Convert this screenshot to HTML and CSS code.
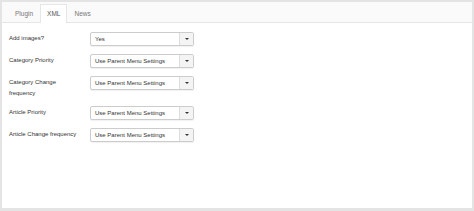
FILE: index.html
```html
<!DOCTYPE html>
<html lang="en">
<head>
    <meta charset="UTF-8">
    <title>Plugin settings</title>
    <link rel="stylesheet" href="styles.css">
</head>
<body>
<div class="panel">
    <!-- Tabs -->
    <ul class="tabs">
        <li><a href="#">Plugin</a></li>
        <li class="active"><a href="#">XML</a></li>
        <li><a href="#">News</a></li>
    </ul>
    <div class="tab-content">
        <div class="field">
            <label>Add images?</label>
            <div class="select"><span>Yes</span><i class="caret"></i></div>
        </div>
        <div class="field">
            <label>Category Priority</label>
            <div class="select"><span>Use Parent Menu Settings</span><i class="caret"></i></div>
        </div>
        <div class="field">
            <label>Category Change frequency</label>
            <div class="select"><span>Use Parent Menu Settings</span><i class="caret"></i></div>
        </div>
        <div class="field">
            <label>Article Priority</label>
            <div class="select"><span>Use Parent Menu Settings</span><i class="caret"></i></div>
        </div>
        <div class="field">
            <label>Article Change frequency</label>
            <div class="select"><span>Use Parent Menu Settings</span><i class="caret"></i></div>
        </div>
    </div>
</div>
</body>
</html>
```

FILE: styles.css
```css
body {
    margin: 0;
    background-color: #e4e4e4;
    font-family: "Liberation Sans", Arial, sans-serif;
    color: #333;
}

.panel {
    margin: 2px 2px 0 2px;
    height: 206px;
    background-color: #fff;
}

.tabs {
    list-style: none;
    margin: 0;
    padding: 1px 0 0 6px;
    height: 19px;
    display: flex;
    align-items: flex-end;
    background-color: #fafafa;
    border-bottom: 1px solid #e6e6e6;
}

.tabs li {
    margin-bottom: -1px;
}

.tabs a {
    display: block;
    height: 18px;
    line-height: 18px;
    padding: 0 6px;
    font-size: 6.5px;
    color: #777;
    text-decoration: none;
    border: 1px solid transparent;
    border-bottom: none;
}

.tabs li.active a {
    background-color: #fff;
    border-color: #e6e6e6;
    color: #555;
}

.tab-content {
    padding: 9px 0 0 7px;
}

.field {
    display: flex;
    align-items: flex-start;
    margin-bottom: 8px;
}

.field label {
    width: 70px;
    margin-right: 11px;
    flex-shrink: 0;
    font-size: 6px;
    line-height: 11px;
    padding-top: 1px;
    margin-bottom: -1px;
}

.select {
    width: 102px;
    height: 12px;
    display: flex;
    border: 1px solid #ccc;
    border-radius: 2px;
    box-shadow: 0 1px 1px rgba(0, 0, 0, 0.06);
    background-color: #fff;
}

.select span {
    flex: 1;
    font-size: 6px;
    line-height: 12px;
    padding-left: 4px;
}

.select .caret {
    width: 13px;
    border-left: 1px solid #ddd;
    background-color: #f4f4f4;
    display: flex;
    align-items: center;
    justify-content: center;
}

.select .caret::after {
    content: "";
    border-left: 2px solid transparent;
    border-right: 2px solid transparent;
    border-top: 2px solid #333;
}
```
